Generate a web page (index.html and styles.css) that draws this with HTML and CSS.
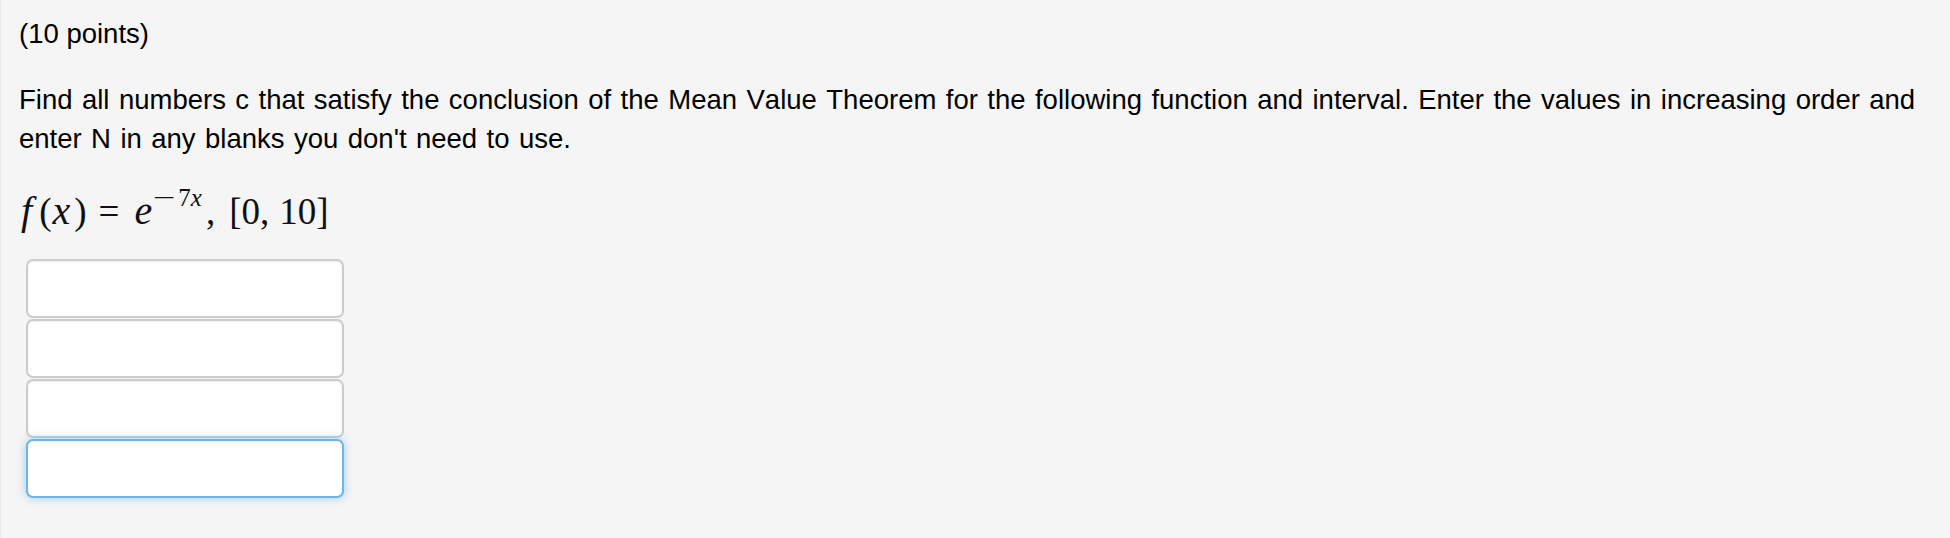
FILE: index.html
```html
<!DOCTYPE html>
<html lang="en">
<head>
  <meta charset="UTF-8" />
  <title>Mean Value Theorem</title>
  <link rel="stylesheet" href="styles.css">
</head>
<body>

<div class="problem">
  <p class="points">(10 points)</p>

  <p class="question">Find all numbers c that satisfy the conclusion of the Mean Value Theorem for the following function and interval. Enter the values in increasing order and enter N in any blanks you don't need to use.</p>

  <p class="math"><i class="fn">f</i><span class="lp">(</span><i class="var">x</i><span class="rp">)</span><span class="eq">=</span><i class="base">e</i><sup class="exp"><span class="minus">&minus;</span>7<i>x</i></sup><span class="comma">,</span><span class="lb">[</span>0<span class="sep">,</span>10<span class="rb">]</span></p>

  <div class="answers">
    <input type="text" class="answer" />
    <input type="text" class="answer" />
    <input type="text" class="answer" />
    <input type="text" class="answer focused" />
  </div>
</div>

</body>
</html>
```

FILE: styles.css
```css
body {
  margin: 0;
  background: #f5f5f5;
  font-family: "Liberation Sans", Arial, sans-serif;
  color: #000;
}

.problem {
  padding: 14px 18px 0 18px;
  border-left: 1px solid #e8e8e8;
  height: 538px;
  box-sizing: border-box;
}

p {
  margin: 0;
}

.points,
.question {
  font-size: 27.5px;
  line-height: 39px;
  font-kerning: none;
}

.question {
  margin-top: 27px;
  word-spacing: 1.8px;
}

/* math line, spaced by hand to look like the TeX output */
.math {
  font-family: "Liberation Serif", "Times New Roman", serif;
  font-size: 37px;
  line-height: 44px;
  margin-top: 31px;
  padding-left: 2px;
  color: #111;
  white-space: nowrap;
}

.math i {
  font-style: italic;
}

.fn,
.var,
.base {
  font-size: 40px;
}

.fn {
  margin-right: 7px;
}

.var {
  margin-left: 1px;
  margin-right: 4px;
}

.eq {
  margin: 0 15px 0 12px;
}

.exp {
  font-size: 25px;
  line-height: 0;
  vertical-align: 18px;
  margin-left: 1px;
}

.minus {
  display: inline-block;
  transform: scaleX(1.6);
  margin: 0 7px 0 4px;
}

.comma {
  margin-left: 4px;
  margin-right: 14px;
}

.sep {
  margin-right: 10px;
}

.answers {
  display: flex;
  flex-direction: column;
  gap: 1px;
  margin-top: 25px;
  padding-left: 7px;
}

.answer {
  width: 318px;
  height: 59px;
  box-sizing: border-box;
  border: 2px solid #cccccc;
  border-radius: 7px;
  background: #fff;
  box-shadow: inset 0 1px 2px rgba(0, 0, 0, 0.08);
  margin: 0;
  font-size: 20px;
  outline: none;
}

.answer.focused {
  border-color: #6db3ec;
  box-shadow: inset 0 1px 2px rgba(0, 0, 0, 0.06), 0 0 10px rgba(102, 175, 233, 0.6);
}
```
